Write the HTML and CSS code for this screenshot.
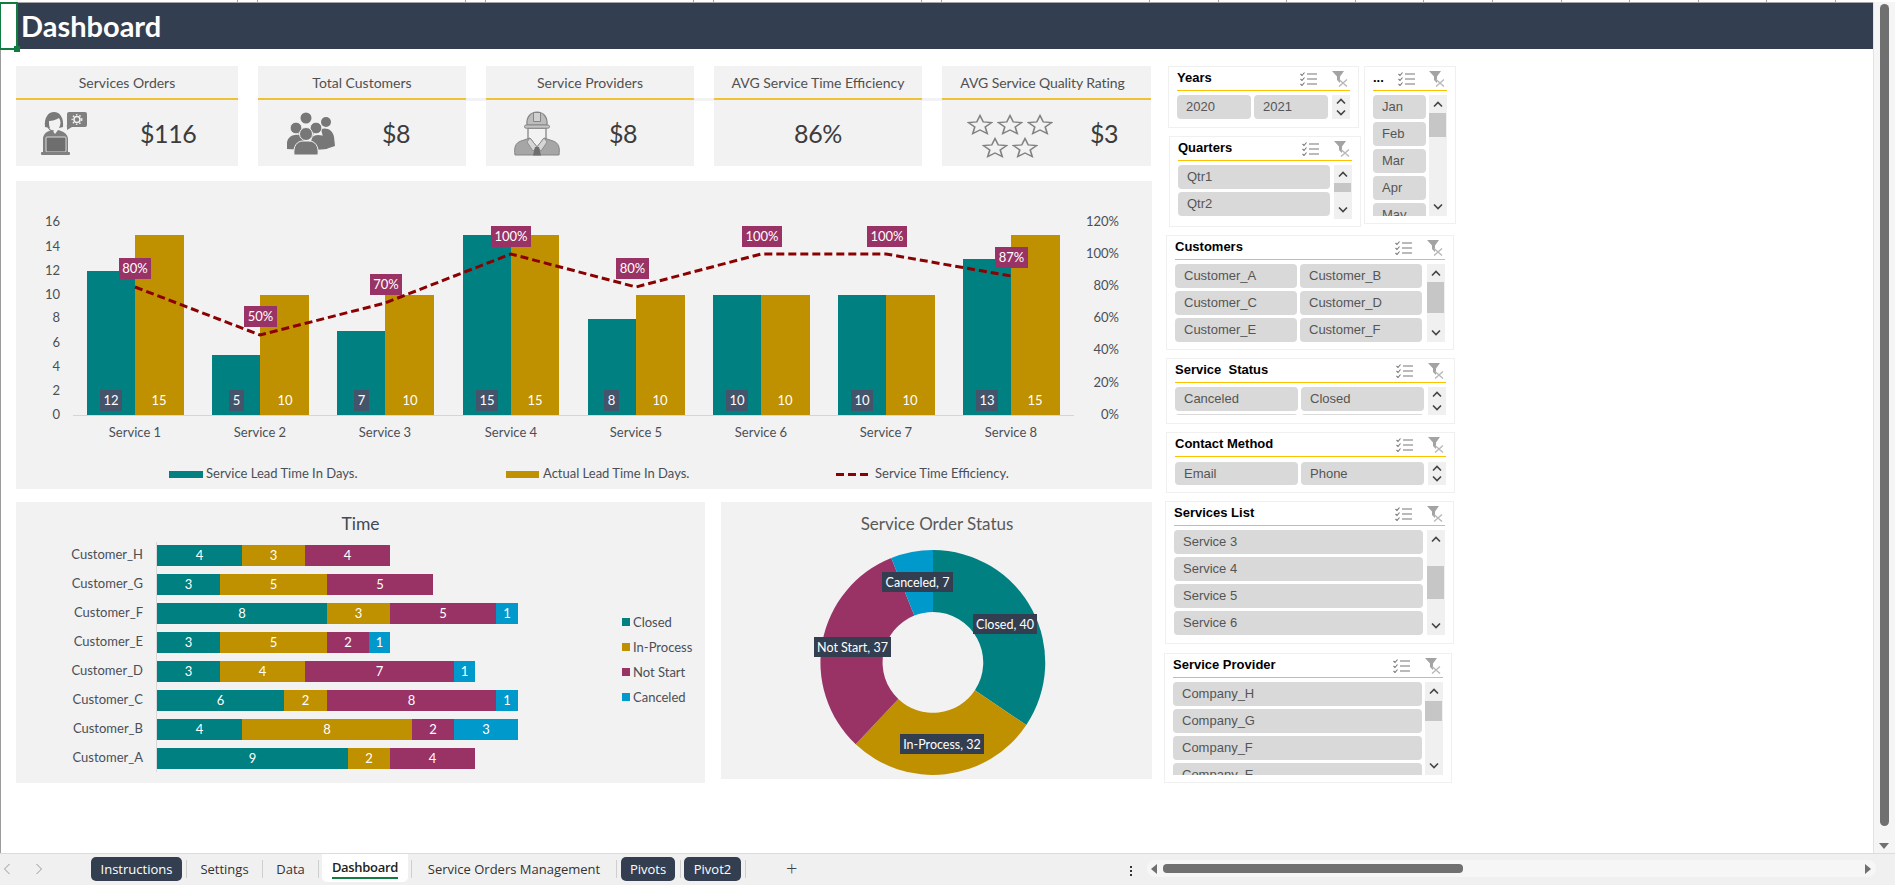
FILE: index.html
```html
<!DOCTYPE html>
<html lang="en">
<head>
<meta charset="utf-8">
<title>Dashboard</title>
<link rel="stylesheet" href="styles.css">
</head>
<body>
<svg class="defs" width="0" height="0" aria-hidden="true">
  <symbol id="i-multi" viewBox="0 0 17 14" preserveAspectRatio="none">
    <path d="M.5 2l1.500 1.500L4.500.5M.5 7L2 8.500l2.500-3M.5 12L2 13.500l2.500-3" fill="none" stroke="#777" stroke-width="1.100"/>
    <path d="M7 2h10M7 7h10M7 12h10" fill="none" stroke="#777" stroke-width="1.200"/>
  </symbol>
  <symbol id="i-clear" viewBox="0 0 16 16">
    <path d="M0 0h12L8 5.500V12L5 9V5.500z" fill="#a3a3a3"/>
    <path d="M7 8.500l8 7M15 8.500l-8 7" fill="none" stroke="#b8b8b8" stroke-width="1.400"/>
  </symbol>
  <symbol id="i-up" viewBox="0 0 10 8"><path d="M1 6.500l4-4 4 4" fill="none" stroke="#444" stroke-width="1.600"/></symbol>
  <symbol id="i-down" viewBox="0 0 10 8"><path d="M1 1.500l4 4 4-4" fill="none" stroke="#444" stroke-width="1.600"/></symbol>
  <symbol id="i-star" viewBox="0 0 24 24" preserveAspectRatio="none"><path d="M12 1.800l3 7.300 7.800.6-6 5.100 1.900 7.600L12 18.300l-6.700 4.100 1.900-7.600-6-5.100 7.800-.6z" fill="none" stroke="#808080" stroke-width="1.500"/></symbol>
</svg>

<div class="ruler">
  <span class="r-a"></span><span class="r-b"></span><span class="r-a"></span><span class="r-b"></span><span class="r-a"></span><span class="r-b"></span><span class="r-a"></span><span class="r-b"></span><span class="r-a"></span>
  <span class="r-c"></span><span class="r-c"></span><span class="r-c"></span><span class="r-c"></span><span class="r-c"></span><span class="r-c"></span><span class="r-c"></span><span class="r-c"></span><span class="r-c"></span><span class="r-c"></span>
</div>

<div class="sheet">
  <div class="cell-select"></div>
  <header class="banner"><h1>Dashboard</h1></header>

  <div class="board">
    <main class="left">
      <section class="kpis">
        <article class="kpi k1">
          <h2>Services Orders</h2>
          <div class="kpi-body">
            <svg class="kpi-icon" width="46" height="43" viewBox="0 0 46 43">
              <path d="M28 0h16a2 2 0 0 1 2 2v11a2 2 0 0 1-2 2H31l-5 3v-3a2 2 0 0 1 0-2V2a2 2 0 0 1 2-2z" fill="#808080"/>
              <circle cx="36" cy="7.500" r="3" fill="none" stroke="#f2f2f2" stroke-width="1.600"/>
              <circle cx="36" cy="7.500" r="4.800" fill="none" stroke="#f2f2f2" stroke-width="1.300" stroke-dasharray="1.500 2"/>
              <path d="M4 15c-1-9 3-15 9-15s10 6 9 15l-4 1c2-4 2-7 0-10-3 2-7 3-10 3 0 3 0 5 1 7z" fill="#7a7a7a"/>
              <path d="M7 14c0 3 3 5 6 5" fill="none" stroke="#7a7a7a" stroke-width="1.200"/>
              <path d="M2 40V27c0-5 4-8 9-9l3 4 3-4c5 1 10 4 10 9v13z" fill="#7f7f7f"/>
              <rect x="5" y="25" width="20" height="15" rx="1" fill="#6e6e6e" stroke="#f2f2f2" stroke-width=".8"/>
              <rect x="0" y="40" width="29" height="3" rx="1" fill="#808080"/>
            </svg>
            <span class="kpi-value v1">$116</span>
          </div>
        </article>
        <article class="kpi k2">
          <h2>Total Customers</h2>
          <div class="kpi-body">
            <svg class="kpi-icon" width="48" height="43" viewBox="0 0 48 43">
              <path d="M34 17c6-2 12 1 13 8l1 9-9 3z" fill="#777"/>
              <circle cx="39" cy="10" r="5" fill="#777"/>
              <path d="M10 18c3-3 15-3 18 0l-3 8H13z" fill="#777"/>
              <circle cx="19" cy="6" r="5.500" fill="#777"/>
              <path d="M0 37c-1-8 1-13 8-14 6-1 10 3 10 9v6z" fill="#777"/>
              <circle cx="9" cy="16" r="5.800" fill="#777" stroke="#f2f2f2" stroke-width=".8"/>
              <path d="M24 32c0-6 2-9 7-9 6 0 11 3 10 10l-1 4-12 1z" fill="#777"/>
              <circle cx="29" cy="16" r="5.800" fill="#777" stroke="#f2f2f2" stroke-width=".8"/>
              <circle cx="19" cy="22" r="6.500" fill="#777" stroke="#f2f2f2" stroke-width="1"/>
              <path d="M7 43c-1-9 3-14 9-14h6c6 0 10 5 9 14z" fill="#777" stroke="#f2f2f2" stroke-width="1"/>
            </svg>
            <span class="kpi-value v2">$8</span>
          </div>
        </article>
        <article class="kpi k3">
          <h2>Service Providers</h2>
          <div class="kpi-body">
            <svg class="kpi-icon" width="46" height="45" viewBox="0 0 46 45">
              <path d="M14 27c0 6 4 10 9 10s9-4 9-10V17H14z" fill="#f2f2f2" stroke="#858585" stroke-width="1.300"/>
              <path d="M13 14c-1-8 4-13 10-13s11 5 10 13z" fill="#bcbcbc" stroke="#858585" stroke-width="1.200"/>
              <path d="M19.500 1.500h7v9h-7z" fill="#d0d0d0" stroke="#858585" stroke-width="1"/>
              <rect x="10.500" y="14" width="25" height="3.200" rx="1.600" fill="#c4c4c4" stroke="#858585" stroke-width="1"/>
              <path d="M1 44c-1-7 0-12 6-14l9-3 7 9 7-9 9 3c6 2 7 7 6 14z" fill="#a6a6a6" stroke="#858585" stroke-width="1"/>
              <path d="M16 27l7 9-4 4-6-9zM30 27l-7 9 4 4 6-9z" fill="#d6d6d6" stroke="#858585" stroke-width=".8"/>
              <path d="M21 36h4l2 8.500h-8z" fill="#6e6e6e"/>
            </svg>
            <span class="kpi-value v3">$8</span>
          </div>
        </article>
        <article class="kpi k4">
          <h2>AVG Service Time Efficiency</h2>
          <div class="kpi-body center"><span class="kpi-value">86%</span></div>
        </article>
        <article class="kpi k5">
          <h2>AVG Service Quality Rating</h2>
          <div class="kpi-body">
            <div class="stars">
              <svg><use href="#i-star"/></svg><svg><use href="#i-star"/></svg><svg><use href="#i-star"/></svg>
              <svg><use href="#i-star"/></svg><svg><use href="#i-star"/></svg>
            </div>
            <span class="kpi-value v5">$3</span>
          </div>
        </article>
      </section>

      <section class="panel combo">
        <svg class="chart" width="1136" height="308" viewBox="16 181 1136 308">
          <g class="axis-text" text-anchor="end">
            <text x="60" y="226">16</text><text x="60" y="251">14</text><text x="60" y="275">12</text>
            <text x="60" y="299">10</text><text x="60" y="322">8</text><text x="60" y="347">6</text>
            <text x="60" y="371">4</text><text x="60" y="395">2</text><text x="60" y="419">0</text>
          </g>
          <g class="axis-text" text-anchor="end">
            <text x="1119" y="226">120%</text><text x="1119" y="258">100%</text><text x="1119" y="290">80%</text>
            <text x="1119" y="322">60%</text><text x="1119" y="354">40%</text><text x="1119" y="387">20%</text>
            <text x="1119" y="419">0%</text>
          </g>
          <line x1="73" y1="415.500" x2="1074" y2="415.500" stroke="#d5d5d5"/>
          <g fill="#008080">
            <rect x="87" y="271" width="48" height="144"/><rect x="212" y="355" width="48" height="60"/>
            <rect x="337" y="331" width="48" height="84"/><rect x="463" y="235" width="48" height="180"/>
            <rect x="588" y="319" width="48" height="96"/><rect x="713" y="295" width="48" height="120"/>
            <rect x="838" y="295" width="48" height="120"/><rect x="963" y="259" width="48" height="156"/>
          </g>
          <g fill="#bf9000">
            <rect x="135" y="235" width="49" height="180"/><rect x="260" y="295" width="49" height="120"/>
            <rect x="385" y="295" width="49" height="120"/><rect x="511" y="235" width="48" height="180"/>
            <rect x="636" y="295" width="49" height="120"/><rect x="761" y="295" width="49" height="120"/>
            <rect x="886" y="295" width="49" height="120"/><rect x="1011" y="235" width="49" height="180"/>
          </g>
          <g fill="#44546a">
            <rect x="100" y="390" width="22" height="21"/><rect x="229" y="390" width="15" height="21"/>
            <rect x="354" y="390" width="15" height="21"/><rect x="476" y="390" width="22" height="21"/>
            <rect x="604" y="390" width="15" height="21"/><rect x="726" y="390" width="22" height="21"/>
            <rect x="851" y="390" width="22" height="21"/><rect x="976" y="390" width="22" height="21"/>
          </g>
          <g class="bar-text" text-anchor="middle">
            <text x="111" y="405">12</text><text x="159" y="405">15</text>
            <text x="236.500" y="405">5</text><text x="285" y="405">10</text>
            <text x="361.500" y="405">7</text><text x="410" y="405">10</text>
            <text x="487" y="405">15</text><text x="535" y="405">15</text>
            <text x="611.500" y="405">8</text><text x="660" y="405">10</text>
            <text x="737" y="405">10</text><text x="785" y="405">10</text>
            <text x="862" y="405">10</text><text x="910" y="405">10</text>
            <text x="987" y="405">13</text><text x="1035" y="405">15</text>
          </g>
          <polyline points="135,287 260,335 385,303 511,254 636,287 761,254 886,254 1011,276" fill="none" stroke="#8b0000" stroke-width="3" stroke-dasharray="8 4"/>
          <g fill="#993366">
            <rect x="119" y="258" width="32" height="21"/><rect x="244" y="306" width="33" height="21"/>
            <rect x="370" y="274" width="32" height="21"/><rect x="491" y="226" width="40" height="21"/>
            <rect x="616" y="258" width="33" height="21"/><rect x="742" y="226" width="40" height="21"/>
            <rect x="867" y="226" width="40" height="21"/><rect x="995" y="247" width="33" height="21"/>
          </g>
          <g class="bar-text" text-anchor="middle">
            <text x="135" y="273">80%</text><text x="260.500" y="321">50%</text>
            <text x="386" y="289">70%</text><text x="511" y="241">100%</text>
            <text x="632.500" y="273">80%</text><text x="762" y="241">100%</text>
            <text x="887" y="241">100%</text><text x="1011.500" y="262">87%</text>
          </g>
          <g class="axis-text" text-anchor="middle">
            <text x="135" y="437">Service 1</text><text x="260" y="437">Service 2</text>
            <text x="385" y="437">Service 3</text><text x="511" y="437">Service 4</text>
            <text x="636" y="437">Service 5</text><text x="761" y="437">Service 6</text>
            <text x="886" y="437">Service 7</text><text x="1011" y="437">Service 8</text>
          </g>
          <rect x="169" y="471" width="34" height="7" fill="#008080"/>
          <text class="axis-text" x="206" y="478">Service Lead Time In Days.</text>
          <rect x="506" y="471" width="33" height="7" fill="#bf9000"/>
          <text class="axis-text" x="543" y="478">Actual Lead Time In Days.</text>
          <line x1="836" y1="474.500" x2="871" y2="474.500" stroke="#8b0000" stroke-width="3" stroke-dasharray="8 4"/>
          <text class="axis-text" x="875" y="478">Service Time Efficiency.</text>
        </svg>
      </section>

      <div class="lower">
        <section class="panel time">
          <h3 class="time-title">Time</h3>
          <div class="time-body">
            <div class="rows">
              <div class="row"><span class="row-label">Customer_H</span><div class="stack"><span class="seg c" style="width:85px">4</span><span class="seg i" style="width:63px">3</span><span class="seg n" style="width:85px">4</span></div></div>
              <div class="row"><span class="row-label">Customer_G</span><div class="stack"><span class="seg c" style="width:63px">3</span><span class="seg i" style="width:107px">5</span><span class="seg n" style="width:106px">5</span></div></div>
              <div class="row"><span class="row-label">Customer_F</span><div class="stack"><span class="seg c" style="width:170px">8</span><span class="seg i" style="width:63px">3</span><span class="seg n" style="width:106px">5</span><span class="seg b" style="width:22px">1</span></div></div>
              <div class="row"><span class="row-label">Customer_E</span><div class="stack"><span class="seg c" style="width:63px">3</span><span class="seg i" style="width:107px">5</span><span class="seg n" style="width:42px">2</span><span class="seg b" style="width:21px">1</span></div></div>
              <div class="row"><span class="row-label">Customer_D</span><div class="stack"><span class="seg c" style="width:63px">3</span><span class="seg i" style="width:85px">4</span><span class="seg n" style="width:149px">7</span><span class="seg b" style="width:21px">1</span></div></div>
              <div class="row"><span class="row-label">Customer_C</span><div class="stack"><span class="seg c" style="width:127px">6</span><span class="seg i" style="width:43px">2</span><span class="seg n" style="width:169px">8</span><span class="seg b" style="width:22px">1</span></div></div>
              <div class="row"><span class="row-label">Customer_B</span><div class="stack"><span class="seg c" style="width:85px">4</span><span class="seg i" style="width:170px">8</span><span class="seg n" style="width:42px">2</span><span class="seg b" style="width:64px">3</span></div></div>
              <div class="row"><span class="row-label">Customer_A</span><div class="stack"><span class="seg c" style="width:191px">9</span><span class="seg i" style="width:42px">2</span><span class="seg n" style="width:85px">4</span></div></div>
            </div>
            <ul class="legend">
              <li><i class="c"></i>Closed</li><li><i class="i"></i>In-Process</li><li><i class="n"></i>Not Start</li><li><i class="b"></i>Canceled</li>
            </ul>
          </div>
        </section>
        <section class="panel donut">
          <svg class="chart" width="431" height="277" viewBox="721 502 431 277">
            <text class="donut-title" x="937" y="530" text-anchor="middle">Service Order Status</text>
            <path fill="#008080" d="M933 550A112.500 112.500 0 0 1 1026.300 725L974.900 690.300A50.500 50.500 0 0 0 933 612z"/>
            <path fill="#bf9000" d="M1026.300 725A112.500 112.500 0 0 1 855.700 744.300L898.300 699.100A50.500 50.500 0 0 0 974.900 690.300z"/>
            <path fill="#993366" d="M855.700 744.300A112.500 112.500 0 0 1 891.300 558L914.300 615.600A50.500 50.500 0 0 0 898.300 699.100z"/>
            <path fill="#0099cc" d="M891.300 558A112.500 112.500 0 0 1 933 550V612A50.500 50.500 0 0 0 914.300 615.600z"/>
            <g fill="#333f50">
              <rect x="973" y="614" width="64" height="20"/><rect x="814" y="637" width="77" height="20"/>
              <rect x="882" y="572" width="71" height="20"/><rect x="900" y="734" width="84" height="20"/>
            </g>
            <g class="donut-text" text-anchor="middle">
              <text x="1005" y="629">Closed, 40</text><text x="852.500" y="652">Not Start, 37</text>
              <text x="917.500" y="587">Canceled, 7</text><text x="942" y="749">In-Process, 32</text>
            </g>
          </svg>
        </section>
      </div>
    </main>

    <aside class="slicers">
      <div class="slicer-top">
        <div class="slicer-col">
          <section class="slicer s-years">
            <header class="sl-head"><b>Years</b><svg class="ic1"><use href="#i-multi"/></svg><svg class="ic2"><use href="#i-clear"/></svg></header>
            <div class="sl-body">
              <div class="items two"><span>2020</span><span>2021</span></div>
              <div class="sl-scroll"><svg><use href="#i-up"/></svg><svg><use href="#i-down"/></svg></div>
            </div>
          </section>
          <section class="slicer s-quarters">
            <header class="sl-head"><b>Quarters</b><svg class="ic1"><use href="#i-multi"/></svg><svg class="ic2"><use href="#i-clear"/></svg></header>
            <div class="sl-body">
              <div class="items"><span>Qtr1</span><span>Qtr2</span></div>
              <div class="sl-scroll"><svg><use href="#i-up"/></svg><i class="thumb t-q"></i><svg><use href="#i-down"/></svg></div>
            </div>
          </section>
        </div>
        <section class="slicer s-months">
          <header class="sl-head"><b>...</b><svg class="ic1"><use href="#i-multi"/></svg><svg class="ic2"><use href="#i-clear"/></svg></header>
          <div class="sl-body">
            <div class="items clip"><span>Jan</span><span>Feb</span><span>Mar</span><span>Apr</span><span>May</span></div>
            <div class="sl-scroll"><svg><use href="#i-up"/></svg><i class="thumb t-m"></i><svg><use href="#i-down"/></svg></div>
          </div>
        </section>
      </div>
      <section class="slicer s-customers">
        <header class="sl-head"><b>Customers</b><svg class="ic1"><use href="#i-multi"/></svg><svg class="ic2"><use href="#i-clear"/></svg></header>
        <div class="sl-body">
          <div class="items two"><span>Customer_A</span><span>Customer_B</span><span>Customer_C</span><span>Customer_D</span><span>Customer_E</span><span>Customer_F</span></div>
          <div class="sl-scroll"><svg><use href="#i-up"/></svg><i class="thumb t-c"></i><svg><use href="#i-down"/></svg></div>
        </div>
      </section>
      <section class="slicer s-status">
        <header class="sl-head"><b>Service&nbsp; Status</b><svg class="ic1"><use href="#i-multi"/></svg><svg class="ic2"><use href="#i-clear"/></svg></header>
        <div class="sl-body">
          <div class="items two clip"><span>Canceled</span><span>Closed</span><span></span><span></span></div>
          <div class="sl-scroll"><svg><use href="#i-up"/></svg><svg><use href="#i-down"/></svg></div>
        </div>
      </section>
      <section class="slicer s-contact">
        <header class="sl-head"><b>Contact Method</b><svg class="ic1"><use href="#i-multi"/></svg><svg class="ic2"><use href="#i-clear"/></svg></header>
        <div class="sl-body">
          <div class="items two"><span>Email</span><span>Phone</span></div>
          <div class="sl-scroll"><svg><use href="#i-up"/></svg><svg><use href="#i-down"/></svg></div>
        </div>
      </section>
      <section class="slicer s-list">
        <header class="sl-head"><b>Services List</b><svg class="ic1"><use href="#i-multi"/></svg><svg class="ic2"><use href="#i-clear"/></svg></header>
        <div class="sl-body">
          <div class="items"><span>Service 3</span><span>Service 4</span><span>Service 5</span><span>Service 6</span></div>
          <div class="sl-scroll"><svg><use href="#i-up"/></svg><i class="thumb t-l"></i><svg><use href="#i-down"/></svg></div>
        </div>
      </section>
      <section class="slicer s-provider">
        <header class="sl-head"><b>Service Provider</b><svg class="ic1"><use href="#i-multi"/></svg><svg class="ic2"><use href="#i-clear"/></svg></header>
        <div class="sl-body">
          <div class="items clip"><span>Company_H</span><span>Company_G</span><span>Company_F</span><span>Company_E</span></div>
          <div class="sl-scroll"><svg><use href="#i-up"/></svg><i class="thumb t-p"></i><svg><use href="#i-down"/></svg></div>
        </div>
      </section>
    </aside>
  </div>

  <div class="vscroll"><i class="v-thumb"></i><i class="v-down"></i></div>
</div>

<footer class="tabs">
  <nav class="tab-nav"><svg width="8" height="14" viewBox="0 0 8 14"><path d="M6.500 2L1.500 7l5 5" fill="none" stroke="#999" stroke-width="1"/></svg><svg width="8" height="14" viewBox="0 0 8 14"><path d="M1.500 2l5 5-5 5" fill="none" stroke="#999" stroke-width="1"/></svg></nav>
  <div class="tab-list">
    <span class="tab pill t-ins">Instructions</span><i class="sep"></i>
    <span class="tab t-set">Settings</span><i class="sep"></i>
    <span class="tab t-dat">Data</span><i class="sep"></i>
    <span class="tab active"><em>Dashboard</em></span><i class="sep"></i>
    <span class="tab t-som">Service Orders Management</span><i class="sep"></i>
    <span class="tab pill t-piv">Pivots</span><i class="sep"></i>
    <span class="tab pill t-pi2">Pivot2</span><i class="sep"></i>
    <span class="plus">+</span>
  </div>
  <div class="tab-dots"><i></i><i></i><i></i></div>
  <div class="hscroll"><i class="h-left"></i><i class="h-thumb"></i><i class="h-right"></i></div>
</footer>
</body>
</html>
```

FILE: styles.css
```css
* { box-sizing: border-box; }
html, body { margin: 0; padding: 0; height: 885px; overflow: hidden; background: #fff; }
body { font-family: Lato, "Liberation Sans", sans-serif; color: #404040; }
.defs { position: absolute; }

.ruler { height: 3px; display: flex; background: #fff; border-bottom: 1px solid #a6a6a6; }
.ruler span { border-right: 1px solid #a6a6a6; flex: none; }
.ruler .r-a { width: 208px; }
.ruler .r-a:first-child { width: 238px; }
.ruler .r-b { width: 20px; }
.ruler .r-c { width: 68.600px; }

.sheet { position: relative; height: 850px; border-left: 1px solid #9c9c9c; padding-right: 21px; }
.cell-select { position: absolute; left: -1px; top: -1px; width: 18px; height: 48px; border: 2px solid #107c41; border-left-width: 1px; background: #fff; z-index: 2; }
.cell-select::after { content: ""; position: absolute; right: -4px; bottom: -4px; width: 6px; height: 6px; background: #107c41; }

.banner { height: 46px; margin-left: 15px; background: #333f50; display: flex; align-items: center; padding-left: 5px; }
.banner h1 { margin: 0; color: #fff; font: 700 29px/46px Lato, sans-serif; }

.board { display: flex; padding: 17px 0 0 15px; }
.left { width: 1136px; display: flex; flex-direction: column; flex: none; }

.kpis { display: grid; grid-template-columns: 222px 208px 208px 208px 209px; column-gap: 20px; height: 100px; background: linear-gradient(#f2f2f2, #f2f2f2) 450px 32px / 476px 3px no-repeat; }
.kpi { background: #f2f2f2; display: flex; flex-direction: column; }
.kpi h2 { margin: 0; height: 34px; border-bottom: 2px solid #efc134; text-align: center; font: 400 14px/33px Lato, sans-serif; color: #505050; white-space: nowrap; }
.k5 h2 { padding-right: 8px; letter-spacing: -.1px; }
.kpi-body { flex: 1; display: flex; align-items: center; position: relative; }
.kpi-body.center { justify-content: center; }
.kpi-icon { margin-left: 25px; flex: none; }
.k2 .kpi-icon { margin-left: 29px; }
.k3 .kpi-icon { margin-left: 28px; }
.kpi-value { font: 400 25px/1 Lato, sans-serif; letter-spacing: -.4px; color: #3c3c3c; }
.v1 { margin-left: 53px; }
.v2 { margin-left: 47px; }
.v3 { margin-left: 49px; }
.v5 { margin-left: 34px; }

.stars { width: 92px; margin: 5px 0 0 22px; display: flex; flex-wrap: wrap; justify-content: center; gap: 2px 4px; }
.stars svg { width: 26px; height: 21px; }

.panel { background: #f2f2f2; }
.combo { margin-top: 15px; height: 308px; }
.chart { display: block; }
.axis-text, .axis-text text { font: 400 13px Lato, sans-serif; fill: #4a4f57; }
.bar-text text { font: 400 13px Lato, sans-serif; fill: #fff; }

.lower { display: grid; grid-template-columns: 689px 431px; column-gap: 16px; margin-top: 13px; align-items: start; }
.time { height: 281px; position: relative; }
.time-title { margin: 0; height: 40px; text-align: center; font: 400 17.500px/43px Lato, sans-serif; color: #404a56; }
.time-body { display: flex; }
.rows { width: 606px; position: relative; }
.rows::before { content: ""; position: absolute; left: 140px; top: 0; height: 230px; width: 1px; background: #d9d9d9; }
.row { height: 29px; display: flex; align-items: flex-start; padding-top: 3px; }
.row-label { width: 127px; text-align: right; margin-right: 14px; font-size: 13px; line-height: 19px; color: #4a4f57; }
.stack { display: flex; height: 21px; }
.seg { display: block; text-align: center; color: #fff; font-size: 13px; line-height: 21px; }
.c { background: #008080; } .i { background: #bf9000; } .n { background: #993366; } .b { background: #0099cc; }
.legend { list-style: none; margin: 67px 0 0; padding: 0; }
.legend li { height: 25px; display: flex; align-items: center; font-size: 13px; color: #4a4f57; }
.legend i { width: 8px; height: 8px; margin-right: 3px; }

.donut { height: 277px; }
.donut-title { font: 400 17px Lato, sans-serif; fill: #595959; }
.donut-text text { font: 400 12.500px Lato, sans-serif; fill: #fff; }

.slicers { margin-left: 14px; width: 292px; flex: none; display: flex; flex-direction: column; align-items: flex-start; font-family: "Liberation Sans", sans-serif; }
.slicer { border: 1px solid #f0f0f0; background: #fff; padding: 0 8px; flex: none; }
.slicer-top { display: flex; align-items: flex-start; margin-left: 3px; gap: 2px; height: 169px; }
.slicer-col { display: flex; flex-direction: column; gap: 8px; width: 193px; }
.sl-head { height: 24px; display: flex; align-items: center; border-bottom: 1px solid #fdc100; }
.sl-head b { font-size: 13px; line-height: 20px; margin-top: -2px; color: #000; flex: 1; white-space: nowrap; overflow: hidden; }
.ic1 { width: 17px; height: 14px; margin-right: 15px; flex: none; }
.ic2 { width: 16px; height: 16px; margin-right: 2px; flex: none; }
.sl-body { display: flex; justify-content: space-between; padding-top: 4px; }
.items { display: grid; grid-auto-rows: 24px; row-gap: 3px; align-content: start; }
.items.two { grid-template-columns: 1fr 1fr; column-gap: 3px; }
.items span { background: #d9d9d9; border-radius: 4px; padding-left: 9px; font-size: 13px; line-height: 24px; color: #555; white-space: nowrap; overflow: hidden; }
.clip { overflow: hidden; }
.sl-scroll { width: 18px; background: #f0f0f0; display: flex; flex-direction: column; align-items: center; justify-content: space-between; position: relative; padding: 5px 0; }
.sl-scroll svg { width: 10px; height: 8px; flex: none; }
.thumb { position: absolute; left: 0; right: 1px; background: #c6c6c6; display: block; }

.s-years { width: 191px; height: 62px; margin-left: -1px; }
.s-years .items { width: 151px; }
.s-years .sl-scroll { height: 24px; padding: 2px 0; }
.s-quarters { width: 192px; height: 91px; }
.s-quarters .items { width: 152px; }
.s-quarters .sl-scroll { height: 54px; }
.t-q { top: 18px; height: 9px; }
.s-months { width: 92px; height: 158px; }
.s-months .ic1 { margin-right: 14px; }
.s-months .items { width: 53px; height: 121px; }
.s-months .sl-scroll { height: 121px; }
.t-m { top: 18px; height: 24px; }
.s-customers { width: 288px; height: 115px; }
.s-customers .items { width: 247px; }
.s-customers .sl-scroll { height: 78px; }
.t-c { top: 18px; height: 31px; }
.s-status { width: 289px; height: 66px; margin-top: 8px; }
.s-status .items { width: 249px; height: 28px; }
.s-status .sl-scroll { height: 28px; padding: 3px 0; }
.s-contact { width: 289px; height: 61px; margin-top: 8px; }
.s-contact .sl-body { padding-top: 5px; }
.s-contact .items { width: 249px; grid-auto-rows: 23px; }
.s-contact .items span { line-height: 23px; }
.s-contact .sl-scroll { height: 23px; padding: 2px 0; }
.s-list { width: 289px; height: 143px; margin-top: 8px; margin-left: -1px; }
.s-list .items { width: 249px; }
.s-list .sl-scroll { height: 105px; }
.t-l { top: 36px; height: 33px; }
.s-provider { width: 288px; height: 130px; margin-top: 9px; margin-left: -2px; }
.s-provider .items { width: 249px; height: 93px; }
.s-provider .sl-scroll { height: 93px; }
.t-p { top: 19px; height: 20px; }

.vscroll { position: absolute; top: -1px; right: 0; bottom: 0; width: 22px; background: #f5f5f5; border-left: 1px solid #e3e3e3; }
.v-thumb { position: absolute; left: 6px; top: 2px; width: 9px; height: 822px; background: #707070; border-radius: 5px; }
.v-down { position: absolute; left: 5px; top: 841px; border: 5px solid transparent; border-top: 6px solid #707070; border-bottom: 0; }

.tabs { height: 32px; background: #f0f0f0; border-top: 1px solid #dcdcdc; display: flex; align-items: flex-start; position: relative; font-family: "Open Sans", sans-serif; font-size: 13px; color: #333; }
.tab-nav { width: 91px; display: flex; gap: 24px; padding: 8px 0 0 3px; flex: none; }
.tab-list { display: flex; align-items: flex-start; width: 1032px; flex: none; }
.tab { display: block; height: 24px; margin-top: 3px; line-height: 24px; white-space: nowrap; flex: none; }
.pill { background: #333f50; color: #fff; border-radius: 5px; text-align: center; }
.t-ins { width: 91px; margin-right: 4px; }
.t-set { width: 75px; text-align: center; }
.t-dat { width: 55px; text-align: center; }
.t-som { width: 204px; text-align: center; }
.t-piv { width: 54px; margin: 3px 5px 0 4px; }
.t-pi2 { width: 57px; margin: 3px 4px 0 3px; }
.sep { width: 1px; height: 18px; margin-top: 6px; background: #cfcfcf; flex: none; }
.active { width: 86px; height: 28px; margin: 0 3px; background: #fff; border-radius: 0 0 5px 5px; text-align: center; }
.active em { display: inline-block; font-style: normal; font-weight: 600; line-height: 20px; margin-top: 3px; color: #222; border-bottom: 2px solid #107c41; letter-spacing: -.3px; }
.plus { font-size: 20px; line-height: 30px; margin-left: 40px; font-weight: 300; color: #444; }
.tab-dots { width: 3px; margin: 12px 0 0 7px; display: flex; flex-direction: column; gap: 2px; flex: none; }
.tab-dots i { width: 2px; height: 2px; background: #333; display: block; }
.hscroll { position: absolute; left: 1147px; top: 6px; width: 729px; height: 17px; background: #f6f6f6; border-radius: 8px; }
.h-thumb { position: absolute; left: 16px; top: 4px; width: 300px; height: 9px; background: #707070; border-radius: 4px; }
.h-left { position: absolute; left: 4px; top: 4px; border: 5px solid transparent; border-right: 6px solid #707070; border-left: 0; }
.h-right { position: absolute; right: 5px; top: 4px; border: 5px solid transparent; border-left: 6px solid #707070; border-right: 0; }
```
